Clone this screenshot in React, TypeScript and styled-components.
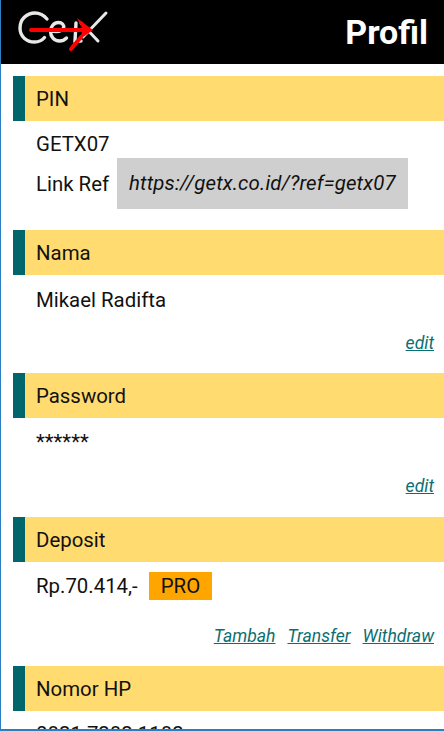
import React from 'react'
import styled, { createGlobalStyle } from 'styled-components'

const GlobalStyle = createGlobalStyle`
  html, body {
    margin: 0;
    padding: 0;
    background: #fff;
  }
  body {
    font-family: Roboto, "Liberation Sans", sans-serif;
    color: #111;
  }
`

const Frame = styled.div`
  box-sizing: border-box;
  width: 444px;
  height: 731px;
  overflow: hidden;
  border-left: 1px solid #2b7fc0;
  border-bottom: 2px solid #2b7fc0;
`

const Header = styled.header`
  height: 64px;
  background: #000;
  display: flex;
  align-items: center;
  justify-content: space-between;
  padding: 0 16px 0 17px;
`

const Title = styled.h1`
  margin: 0;
  color: #fff;
  font-size: 34px;
  font-weight: 700;
  line-height: 66px;
`

const Content = styled.main`
  padding: 12px 0 0 12px;
`

const Heading = styled.h2`
  margin: 0;
  height: 45px;
  box-sizing: border-box;
  background: #ffdb70;
  border-left: 12px solid #00666b;
  padding-left: 11px;
  font-size: 20.4px;
  font-weight: 400;
  line-height: 46px;
`

const Body = styled.div<{ $height: number }>`
  height: ${({ $height }) => $height}px;
  padding: 0 10px 0 23px;
`

const Line = styled.div<{ $height: number; $top?: number }>`
  box-sizing: border-box;
  display: flex;
  align-items: center;
  gap: 8px;
  font-size: 20.4px;
  line-height: 24px;
  height: ${({ $height }) => $height}px;
  padding-top: ${({ $top }) => $top ?? 0}px;
`

const LinkBox = styled.div`
  background: #cfcfcf;
  width: 291px;
  height: 51px;
  box-sizing: border-box;
  padding-left: 12px;
  font-style: italic;
  letter-spacing: 0.14px;
  line-height: 51px;
  white-space: nowrap;
`

const Badge = styled.span`
  display: inline-block;
  background: #ffa500;
  height: 28px;
  line-height: 28px;
  padding: 0 12px;
  margin-left: 3px;
`

const Actions = styled.div<{ $top: number }>`
  display: flex;
  justify-content: flex-end;
  gap: 12px;
  height: 21px;
  margin-top: ${({ $top }) => $top}px;
`

const ActionLink = styled.a`
  color: #0a6f72;
  font-size: 17.6px;
  font-style: italic;
  text-decoration: underline;
  line-height: 23px;
`

const Logo = () => (
  <svg width="92" height="46" viewBox="0 0 92 46" fill="none">
    <g stroke="#e8e8e8" strokeWidth="3.4" strokeLinecap="round">
      <path d="M29 10C26 6.500 22 4 17 4 8.500 4 2 10.500 2 19s6.500 14 14.500 14c4 0 7.500-1.500 10-4.500" />
      <path d="M33 22c6 1 11 .5 12.500-3 1-3-1.500-5.500-5-5.500-4.500 0-8 4-8 9s3.500 9.500 9 9.500c3 0 5-1 7-3" />
      <path d="M58 14 L57 32 L63 32" />
      <path d="M88 4 L65 28" strokeWidth="3" />
      <path d="M63 14 L80 32" strokeWidth="3" />
    </g>
    <g stroke="#f00" strokeLinecap="round">
      <path d="M13 21 L70 21" strokeWidth="4" />
      <path d="M63 28 L53 40" strokeWidth="4" />
    </g>
    <path d="M59 9 L75 21 L61 31 L65 21 Z" fill="#f00" />
  </svg>
)

const App = () => (
  <Frame>
    <GlobalStyle />
    <Header>
      <Logo />
      <Title>Profil</Title>
    </Header>
    <Content>
      <section>
        <Heading>PIN</Heading>
        <Body $height={109}>
          <Line $height={37} $top={9}>GETX07</Line>
          <Line $height={51}>
            Link Ref
            <LinkBox>https://getx.co.id/?ref=getx07</LinkBox>
          </Line>
        </Body>
      </section>
      <section>
        <Heading>Nama</Heading>
        <Body $height={98}>
          <Line $height={48} $top={1}>Mikael Radifta</Line>
          <Actions $top={9}>
            <ActionLink>edit</ActionLink>
          </Actions>
        </Body>
      </section>
      <section>
        <Heading>Password</Heading>
        <Body $height={99}>
          <Line $height={48}>******</Line>
          <Actions $top={9}>
            <ActionLink>edit</ActionLink>
          </Actions>
        </Body>
      </section>
      <section>
        <Heading>Deposit</Heading>
        <Body $height={104}>
          <Line $height={48}>
            Rp.70.414,-
            <Badge>PRO</Badge>
          </Line>
          <Actions $top={15}>
            <ActionLink>Tambah</ActionLink>
            <ActionLink>Transfer</ActionLink>
            <ActionLink>Withdraw</ActionLink>
          </Actions>
        </Body>
      </section>
      <section>
        <Heading>Nomor HP</Heading>
        <Body $height={40}>
          <Line $height={45}>0821 7282 1182</Line>
        </Body>
      </section>
    </Content>
  </Frame>
)

export default App
